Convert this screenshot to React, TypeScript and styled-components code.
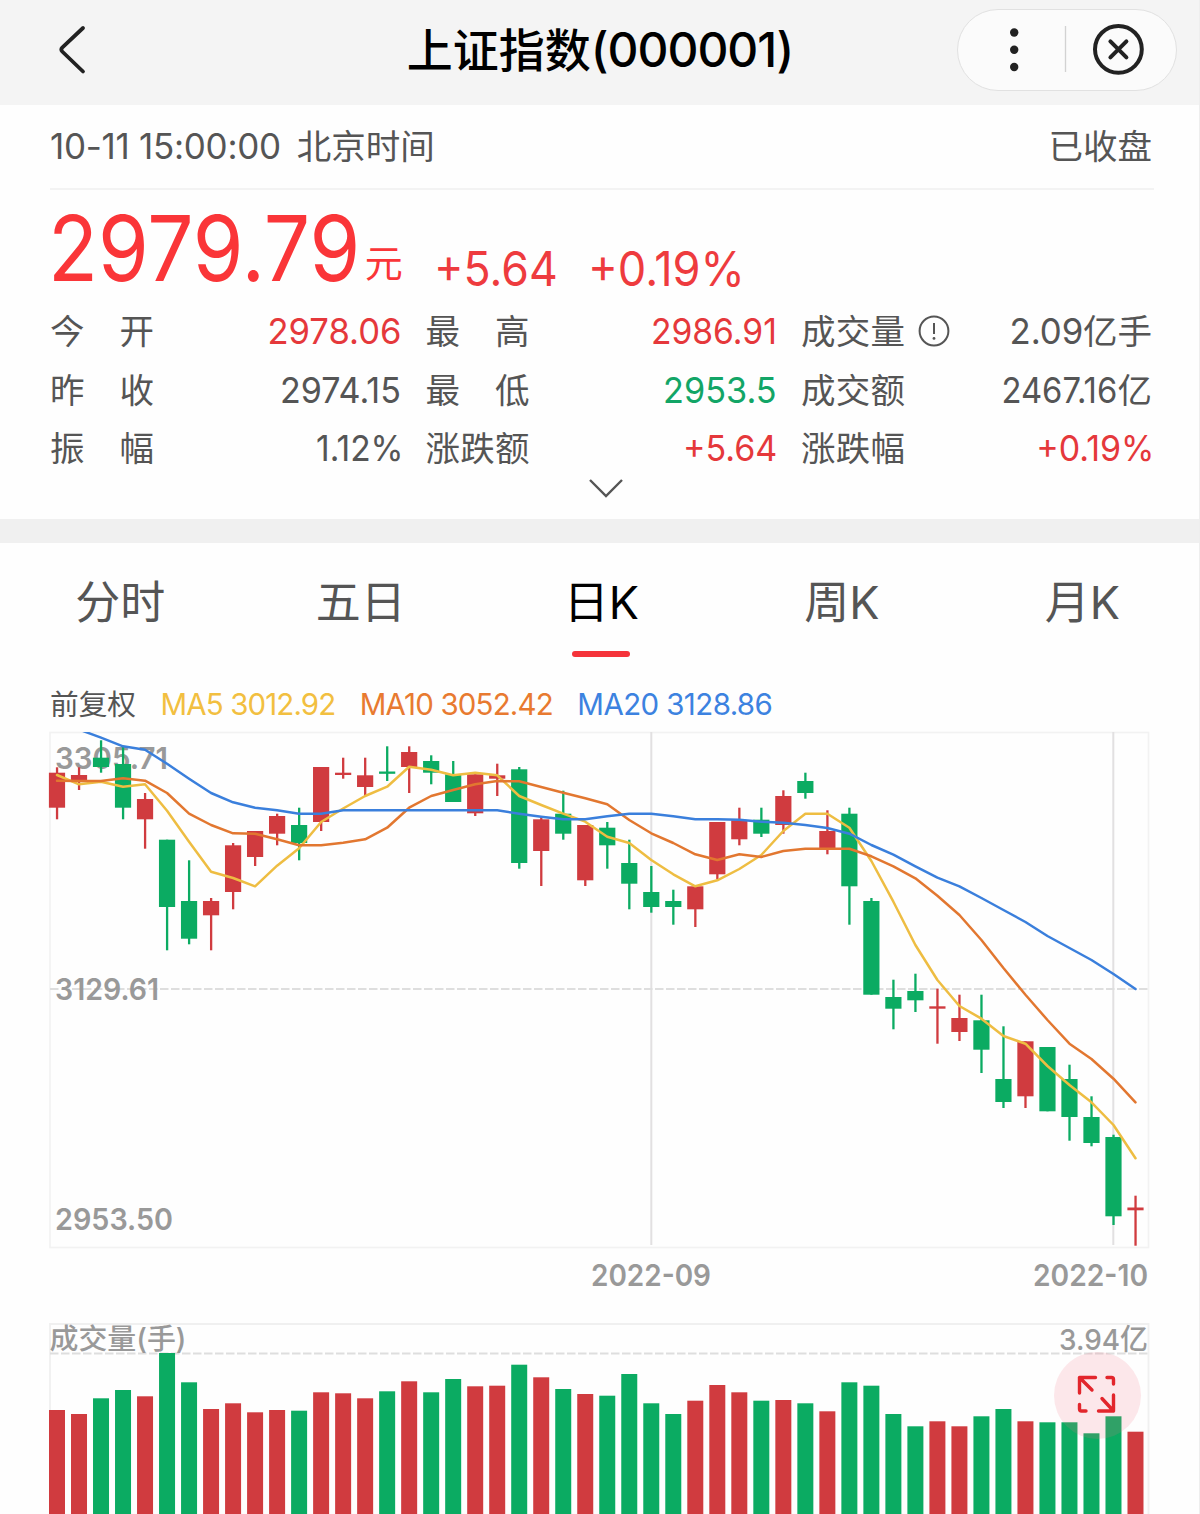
import React from "react";
import styled, { createGlobalStyle } from "styled-components";

const RED = "#d03b3f";
const GREEN = "#0bab62";
const FONT = `"Inter", "Noto Sans CJK SC", sans-serif`;

const GlobalStyle = createGlobalStyle`
  * { box-sizing: border-box; }
  html, body { margin: 0; padding: 0; background: #fefefe; }
  body { font-family: ${FONT}; overflow: hidden; }
`;

const Page = styled.main`
  display: flex;
  flex-direction: column;
  width: 1200px;
  height: 1514px;
  overflow: hidden;
  background: #fefefe;
  border-right: 1px solid #eeeeee;
`;

const Header = styled.header`
  display: grid;
  grid-template-columns: 243px 1fr 242px;
  align-items: center;
  height: 105px;
  padding-bottom: 6px;
  background: #f4f4f4;
`;

const BackButton = styled.button`
  display: flex;
  width: 60px;
  height: 60px;
  margin-left: 42px;
  padding: 0;
  border: 0;
  background: none;
`;

const Title = styled.h1`
  display: flex;
  align-items: center;
  justify-content: center;
  margin: 0;
  color: #000;
  font-size: 46px;
  font-weight: 500;
  line-height: 60px;
  white-space: nowrap;
`;

const Capsule = styled.div`
  display: flex;
  align-items: center;
  width: 220px;
  height: 82px;
  border: 1px solid #e1e1e1;
  border-radius: 41px;
  background: #fbfbfb;
`;

const Num = styled.span<{ $size: number; $ls?: number; $weight?: number }>`
  font-size: ${(p) => p.$size}px;
  letter-spacing: ${(p) => p.$ls ?? 0}px;
  font-weight: ${(p) => p.$weight ?? 400};
  white-space: pre;
`;

/* Condensed digits; the trim takes back the width freed by the scale. */
const Condensed = styled(Num)<{ $scale: number; $from: "left" | "right"; $trim?: number }>`
  display: inline-block;
  transform: scaleX(${(p) => p.$scale});
  transform-origin: ${(p) => p.$from} center;
  margin-right: ${(p) => -(p.$trim ?? 0)}px;
`;

const MetaRow = styled.section`
  display: flex;
  align-items: center;
  justify-content: space-between;
  height: 85px;
  margin: 0 45px 0 50px;
  padding: 0 2px 6px 0;
  border-bottom: 2px solid #f3f3f3;
  color: #555;
  font-size: 34.5px;
`;

const MetaGroup = styled.div`
  display: flex;
  align-items: baseline;
  gap: 16px;
`;

const PriceRow = styled.section`
  display: flex;
  align-items: baseline;
  height: 113px;
  padding: 2px 48px 0;
  color: #fa3538;
  line-height: 112px;
`;

const Unit = styled.span`
  position: relative;
  top: -4px;
  margin-left: 6px;
  font-size: 38px;
`;

const Change = styled.span<{ $gap: number }>`
  position: relative;
  top: 5px;
  margin-left: ${(p) => p.$gap}px;
  color: #ee3b3e;
`;

const Stats = styled.section`
  display: grid;
  grid-template-columns: 351px 351px 351px;
  grid-auto-rows: 58.5px;
  column-gap: 24.5px;
  padding-left: 50px;
`;

const Stat = styled.div`
  display: flex;
  align-items: center;
  color: #555;
  font-size: 34.5px;
  line-height: 58px;
`;

const StatLabel = styled.span`
  display: flex;
  justify-content: space-between;
  width: 104px;
`;

const StatValue = styled.span<{ $color?: string; $outdent?: number }>`
  margin-left: auto;
  margin-right: ${(p) => -(p.$outdent ?? 0)}px;
  color: ${(p) => p.$color ?? "#555"};
`;

const InfoIcon = styled.svg`
  margin: -2px 0 0 13px;
`;

const ExpandRow = styled.div`
  display: flex;
  justify-content: center;
  height: 40.5px;
  padding-left: 12px;
`;

const SectionGap = styled.div`
  height: 24px;
  background: #f0f0f0;
`;

const Tabs = styled.nav`
  display: grid;
  grid-template-columns: repeat(5, 240.5px);
  height: 142px;
`;

const Tab = styled.button<{ $active?: boolean }>`
  display: flex;
  flex-direction: column;
  align-items: center;
  padding: 26px 0 0;
  border: 0;
  background: none;
  color: ${(p) => (p.$active ? "#000" : "#555")};
  font-family: ${FONT};
  font-size: 45px;
  line-height: 68px;
  &::after {
    content: "";
    width: 58px;
    height: 6px;
    margin-top: 14px;
    border-radius: 3px;
    background: ${(p) => (p.$active ? "#f5333a" : "transparent")};
  }
`;

const Legend = styled.div`
  display: flex;
  align-items: baseline;
  gap: 24.5px;
  height: 46px;
  padding-left: 50px;
  color: #555;
  font-size: 28.7px;
  line-height: 38px;
`;

const LegendItem = styled.span<{ $color: string }>`
  color: ${(p) => p.$color};
`;

const PriceChart = styled.svg`
  display: block;
  flex: none;
`;

const VolumePane = styled.div`
  position: relative;
  flex: none;
  height: 198px;
`;

const FullscreenButton = styled.button`
  position: absolute;
  left: 1054px;
  top: 36px;
  width: 87px;
  height: 87px;
  padding: 0;
  border: 0;
  border-radius: 50%;
  background: rgba(240, 115, 132, 0.16);
`;

// [direction, body top, body bottom, wick top, wick bottom, volume top]
type Candle = ["r" | "g", number, number, number, number, number];
const candles: Candle[] = [
  ["r", 772.7, 807.7, 767.3, 819.3, 1410],
  ["r", 775, 781, 767.3, 790, 1414],
  ["g", 757.7, 767, 740.3, 772.7, 1398.3],
  ["g", 764, 807.7, 747, 819.3, 1390],
  ["r", 799, 819.3, 793, 848.7, 1396.3],
  ["g", 839.7, 907, 839.7, 950.3, 1353],
  ["g", 901, 938.7, 860.3, 944.3, 1382.3],
  ["r", 901, 915.3, 898, 950.3, 1409],
  ["r", 845.3, 892, 843, 909.3, 1403.3],
  ["r", 831, 857, 831, 866, 1412.3],
  ["r", 816, 833.7, 813.7, 845.3, 1410],
  ["g", 825, 843, 807.7, 860.3, 1410.7],
  ["r", 767, 822, 767, 831, 1392.3],
  ["r", 772.7, 775, 757.7, 778.7, 1393.3],
  ["r", 775.3, 787, 757.7, 796, 1398.3],
  ["g", 771.5, 773.8, 746.3, 781, 1391.3],
  ["r", 752, 767, 746.3, 793, 1381.3],
  ["g", 761, 772.7, 755.3, 784.3, 1392.3],
  ["g", 774.3, 802, 761, 802, 1379],
  ["r", 774.3, 813.3, 774.3, 816, 1386.3],
  ["r", 775.3, 778.7, 763.7, 796, 1385.7],
  ["g", 769.3, 863, 767, 868.7, 1364.7],
  ["r", 819.3, 851, 817, 886, 1377.3],
  ["g", 813.7, 833.7, 790.7, 839.7, 1389],
  ["r", 825, 880.3, 825, 886, 1394],
  ["g", 827.7, 845.3, 822, 868.7, 1395.7],
  ["g", 863, 883.7, 839.7, 909.3, 1374],
  ["g", 892, 907, 866, 912.7, 1403.3],
  ["g", 901, 907, 889.7, 924.7, 1414],
  ["r", 886.3, 909.3, 886.3, 927, 1400.7],
  ["r", 822, 874.3, 822, 879, 1385],
  ["r", 820.3, 839.3, 807.7, 845.3, 1392.3],
  ["g", 819.7, 833.7, 807.7, 837, 1400.7],
  ["r", 796, 825, 790.3, 833.7, 1400],
  ["g", 781, 793, 772.7, 798.7, 1403.3],
  ["r", 831, 848.7, 810.3, 854.3, 1411.3],
  ["g", 813.7, 886.3, 807.7, 924.7, 1382.3],
  ["g", 901, 994.7, 898, 994.7, 1385.7],
  ["g", 997, 1008.7, 979.7, 1029.3, 1414],
  ["g", 991, 1000.3, 973.7, 1012, 1426.3],
  ["r", 1006.3, 1008.7, 988.7, 1043.7, 1421.3],
  ["r", 1018, 1032, 994.7, 1041, 1426.3],
  ["g", 1020.3, 1049.7, 994.7, 1073, 1416.3],
  ["g", 1079, 1102, 1026.3, 1108, 1409],
  ["r", 1041.3, 1096.3, 1041.3, 1108, 1421.3],
  ["g", 1047, 1111.3, 1047, 1111.3, 1422.3],
  ["g", 1079, 1117, 1064.7, 1140.7, 1422.3],
  ["g", 1117, 1143, 1096.3, 1146.3, 1433.3],
  ["g", 1137, 1216.3, 1134.7, 1225, 1416.3],
  ["r", 1207.5, 1210.3, 1195.7, 1245.7, 1431.7],
];

const ma5 = [775, 784.3, 781.7, 786.7, 784.3, 810.7, 841.7, 871.7, 878, 886.3, 865.7, 848.3, 822, 808.5, 796, 786.7, 766.7, 769.7, 775.3, 772.7, 775.3, 796, 805, 813.7, 821.7, 836.7, 843, 860, 874.3, 886.3, 880.3, 869, 855, 831, 813.7, 813.7, 827.7, 861, 901.7, 945, 980, 1006, 1018.7, 1036, 1043.7, 1066, 1085, 1102.3, 1125, 1158.3];
const ma10 = [780.7, 781, 781, 778.3, 780.7, 793, 813.7, 825, 833.3, 833.7, 839.3, 845.3, 845.3, 842.7, 839.3, 827.7, 807.7, 796, 790, 784.3, 781, 781.3, 787, 792.7, 798.3, 804.3, 820, 833.3, 843, 854.3, 860, 854.3, 857, 851, 848.7, 848.7, 848.7, 856.3, 866.3, 878.3, 895.7, 915, 940, 968, 994.7, 1020, 1043.7, 1059, 1078.7, 1102.3];
const ma20 = [718, 729.5, 737.7, 746.3, 749.7, 763.7, 778.7, 793, 802.3, 807.7, 810.3, 813.7, 813.7, 810.3, 810.3, 810.3, 810.3, 810.3, 810.3, 810.3, 810.3, 813.7, 816.7, 819.3, 819.3, 816.3, 813.7, 813.7, 816.3, 819.3, 819.3, 819.7, 821.7, 822.7, 825, 828, 833.7, 845, 854.7, 866.3, 877.7, 886.3, 898, 910, 922, 936, 948, 960, 974, 989];

const centre = (i: number) => 57 + i * 22.01;
const toPoints = (ys: number[]) => ys.map((y, i) => `${centre(i)},${y}`).join(" ");

const axis = {
  fontFamily: FONT,
  fontSize: 30,
  fontWeight: 600,
  fill: "#999",
  lengthAdjust: "spacingAndGlyphs" as const,
};

const UP = "#e5383b";
const DOWN = "#12a566";

interface StatItem {
  label: string;
  value: string;
  unit?: string;
  color?: string;
  info?: boolean;
  scale: number;
  outdent?: number;
}

const stats: StatItem[] = [
  { label: "今开", value: "2978.06", color: UP, scale: 0.975 },
  { label: "最高", value: "2986.91", color: UP, scale: 0.948 },
  { label: "成交量", value: "2.09", unit: "亿手", info: true, scale: 0.98 },
  { label: "昨收", value: "2974.15", scale: 0.96 },
  { label: "最低", value: "2953.5", color: DOWN, scale: 0.965 },
  { label: "成交额", value: "2467.16", unit: "亿", scale: 0.925 },
  { label: "振幅", value: "1.12%", scale: 0.945, outdent: 2.5 },
  { label: "涨跌额", value: "+5.64", color: UP, scale: 0.96, outdent: 1 },
  { label: "涨跌幅", value: "+0.19%", color: UP, scale: 0.958, outdent: 2.5 },
];

const tabs = ["分时", "五日", "日K", "周K", "月K"];

export default function App() {
  return (
    <>
      <GlobalStyle />
      <Page>
        <Header>
          <BackButton aria-label="返回">
            <svg width="60" height="60" viewBox="42 19.5 60 60" fill="none">
              <path d="M83 27.5 62.2 47.2q-1.9 1.9 0 3.8L83 71" stroke="#222" strokeWidth="3.8" strokeLinecap="round" />
            </svg>
          </BackButton>
          <Title>
            上证指数<Num $size={48} $weight={500} $ls={-1}>(000001)</Num>
          </Title>
          <Capsule>
            <svg width="218" height="80" viewBox="958 10 218 80" fill="none">
              <g fill="#222">
                <circle cx="1014.2" cy="32.5" r="4.2" />
                <circle cx="1014.2" cy="49.7" r="4.2" />
                <circle cx="1014.2" cy="67" r="4.2" />
              </g>
              <path d="M1065.5 26v46" stroke="#d2d2d2" strokeWidth="1.3" />
              <circle cx="1118.4" cy="49.3" r="23.4" stroke="#222" strokeWidth="4" />
              <path d="m1110.4 41.3 16 16m0-16-16 16" stroke="#222" strokeWidth="4" strokeLinecap="round" />
            </svg>
          </Capsule>
        </Header>

        <MetaRow>
          <MetaGroup>
            <Num $size={35} $ls={-0.28}>10-11 15:00:00</Num>
            <span>北京时间</span>
          </MetaGroup>
          <span>已收盘</span>
        </MetaRow>

        <PriceRow>
          <Condensed $size={91} $scale={0.9} $from="left" $trim={36}>2979.79</Condensed>
          <Unit>元</Unit>
          <Change $gap={31}>
            <Condensed $size={48} $scale={0.93} $from="left" $trim={9}>+5.64</Condensed>
          </Change>
          <Change $gap={30}>
            <Condensed $size={48} $scale={0.94} $from="left" $trim={10}>+0.19%</Condensed>
          </Change>
        </PriceRow>

        <Stats>
          {stats.map((s) => (
            <Stat key={s.label}>
              <StatLabel>
                {s.label.split("").map((ch) => (
                  <span key={ch}>{ch}</span>
                ))}
              </StatLabel>
              {s.info && (
                <InfoIcon width="32" height="32" viewBox="0 0 32 32" fill="none">
                  <circle cx="16" cy="16" r="14.4" stroke="#555" strokeWidth="2" />
                  <path d="M16 8v11" stroke="#555" strokeWidth="2" />
                  <circle cx="16" cy="23.4" r="1.4" fill="#555" />
                </InfoIcon>
              )}
              <StatValue $color={s.color} $outdent={s.outdent}>
                <Condensed $size={35.5} $scale={s.scale} $from="right">{s.value}</Condensed>
                {s.unit}
              </StatValue>
            </Stat>
          ))}
        </Stats>

        <ExpandRow>
          <svg width="38" height="24" viewBox="0 1 38 24" fill="none">
            <path d="m3 2 16 16L35 2" stroke="#555" strokeWidth="2.4" />
          </svg>
        </ExpandRow>

        <SectionGap />

        <Tabs>
          {tabs.map((t) => (
            <Tab key={t} $active={t === "日K"}>
              {t}
            </Tab>
          ))}
        </Tabs>

        <Legend>
          <span>前复权</span>
          <LegendItem $color="#f2bf40">
            <Num $size={29.5} $ls={-0.9}>MA5 3012.92</Num>
          </LegendItem>
          <LegendItem $color="#e87a30">
            <Num $size={29.5} $ls={-0.85}>MA10 3052.42</Num>
          </LegendItem>
          <LegendItem $color="#3c82e0">
            <Num $size={29.5} $ls={-0.6}>MA20 3128.86</Num>
          </LegendItem>
        </Legend>

        <PriceChart width="1199" height="585" viewBox="0 731 1199 585" fill="none">
          <defs>
            <clipPath id="plot">
              <rect x="50" y="732" width="1098" height="515" />
            </clipPath>
          </defs>
          <rect x="50" y="732.5" width="1098.5" height="515" stroke="#f2f2f2" strokeWidth="1.6" />
          <path d="M651.3 732v513M1113.3 732v513" stroke="#e2e0e1" strokeWidth="2" />
          <path d="M50 989H1148" stroke="#dedede" strokeWidth="2" strokeDasharray="8.5 2.5" />
          <text {...axis} x="55" y="769" textLength="113">3305.71</text>
          <text {...axis} x="55" y="1000" textLength="104">3129.61</text>
          <text {...axis} x="55" y="1230" textLength="118">2953.50</text>
          {candles.map(([d, top, bottom, high, low], i) => (
            <g key={i} fill={d === "r" ? RED : GREEN}>
              <rect x={centre(i) - 1.1} y={high} width={2.3} height={low - high} />
              <rect x={centre(i) - 8.1} y={top} width={16.2} height={bottom - top} />
            </g>
          ))}
          <g clipPath="url(#plot)" strokeWidth="2.5" strokeLinejoin="round" strokeLinecap="round">
            <polyline points={toPoints(ma5)} stroke="#eebd42" />
            <polyline points={toPoints(ma10)} stroke="#e27730" />
            <polyline points={toPoints(ma20)} stroke="#3a7fdc" />
          </g>
          <text {...axis} x="591" y="1286" textLength="120">2022-09</text>
          <text {...axis} x="1033" y="1286" textLength="115">2022-10</text>
        </PriceChart>

        <VolumePane>
          <svg width="1199" height="198" viewBox="0 1316 1199 198" fill="none">
            <path d="M50 1514V1324H1148.5V1514" stroke="#f0f0f0" strokeWidth="1.8" />
            <path d="M50 1353.5H1148" stroke="#dedede" strokeWidth="2" strokeDasharray="8.5 2.5" />
            <text {...axis} x="49.5" y="1349" fontSize={28.5} fontWeight={500} textLength="137">成交量(手)</text>
            <text {...axis} x="1059" y="1349.5" fontSize={29} fontWeight={500} textLength="89">3.94亿</text>
            {candles.map(([d, , , , , top], i) => (
              <rect key={i} x={centre(i) - 8} y={top} width={16} height={1514 - top} fill={d === "r" ? RED : GREEN} />
            ))}
          </svg>
          <FullscreenButton aria-label="全屏">
            <svg width="87" height="87" viewBox="1054 1352 87 87" fill="none" stroke="#e2262c" strokeWidth="3.4" strokeLinecap="round" strokeLinejoin="round">
              <path d="M1095.5 1377.5H1079.5V1393M1079.5 1377.5 1092 1390" />
              <path d="M1107 1377.5h4.5q2 0 2 2v4.5M1079.5 1404.5v4.5q0 2 2 2h4.5" />
              <path d="M1098.5 1411h15V1395M1113.5 1411 1102 1398.5" />
            </svg>
          </FullscreenButton>
        </VolumePane>
      </Page>
    </>
  );
}
